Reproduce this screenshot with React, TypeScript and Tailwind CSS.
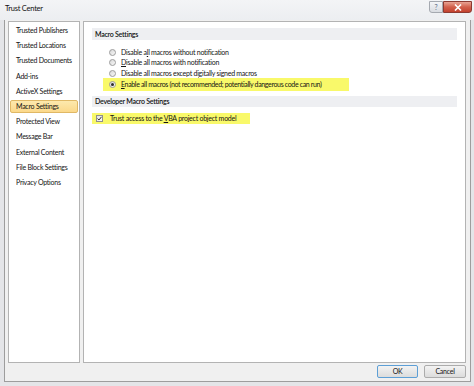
import React from "react";

const navItems = [
  "Trusted Publishers",
  "Trusted Locations",
  "Trusted Documents",
  "Add-ins",
  "ActiveX Settings",
  "Macro Settings",
  "Protected View",
  "Message Bar",
  "External Content",
  "File Block Settings",
  "Privacy Options",
];

const Radio = ({ checked = false }: { checked?: boolean }) => (
  <span className="w-[7px] h-[7px] rounded-full border border-[#9c9c9c] bg-gradient-to-br from-[#d8d8d8] to-[#f8f8f8] flex items-center justify-center shrink-0">
    {checked && <span className="w-[3px] h-[3px] rounded-full bg-[#2b2b2b]" />}
  </span>
);

const App: React.FC = () => {
  return (
    <div className="w-[474px] h-[386px] overflow-hidden bg-[#e4e5e8] text-[7px] tracking-[-0.25px] leading-none whitespace-nowrap text-[#141414] font-['Lato',sans-serif]">
      {/* title bar */}
      <div className="h-[20px] flex items-start justify-between bg-gradient-to-b from-[#f3f4f6] to-[#eceef1]">
        <span className="pl-[5px] pt-[5px] text-[7.5px] text-[#111]">Trust Center</span>
        <div className="flex pt-[1px] pr-[2px]">
          <span className="w-[14px] h-[12px] border border-[#a5a9b0] rounded-bl-[3px] bg-gradient-to-b from-[#f4f5f7] to-[#d9dce1] text-[7px] text-[#5a6a85] flex items-center justify-center">
            ?
          </span>
          <span className="w-[29px] h-[12px] border border-[#8c3a32] rounded-br-[3px] bg-gradient-to-b from-[#e7a394] via-[#d2604c] to-[#c2412e] flex items-center justify-center">
            <svg width="8" height="7" viewBox="0 0 8 7">
              <path d="M1 0.5 L7 6.5 M7 0.5 L1 6.5" stroke="#ffffff" strokeWidth="1.6" />
            </svg>
          </span>
        </div>
      </div>

      {/* dialog body */}
      <div className="ml-[4px] w-[467px] h-[362px] border-x border-b border-[#9d9d9d] bg-[#f0f0f0] pt-[1px] pl-[3px] pr-[4px] flex flex-col">
        <div className="flex gap-[3px] h-[342px]">
          {/* nav */}
          <div className="w-[72px] h-full border border-[#b3b3b3] bg-white pt-[1px] overflow-hidden">
            {navItems.map((item) => (
              <div key={item} className="h-[15.2px] px-[1px] flex items-center">
                <div
                  className={
                    item === "Macro Settings"
                      ? "w-full h-[13px] flex items-center pl-[5px] rounded-[2px] border border-[#e0b865] bg-gradient-to-b from-[#fde9ad] to-[#fbd88a]"
                      : "w-full h-[13px] flex items-center pl-[6px]"
                  }
                >
                  {item}
                </div>
              </div>
            ))}
          </div>

          {/* content */}
          <div className="w-[383px] h-full border border-[#b3b3b3] bg-white pt-[6px] px-[8px]">
            <div className="h-[12px] bg-[#eeeff2] flex items-center pl-[3px] font-semibold">
              Macro Settings
            </div>
            <div className="mt-[7px] flex flex-col">
              <label className="h-[10.5px] flex items-center gap-[5px] pl-[17px]">
                <Radio />
                <span>
                  Disable a<u>l</u>l macros without notification
                </span>
              </label>
              <label className="h-[10.5px] flex items-center gap-[5px] pl-[17px]">
                <Radio />
                <span>
                  <u>D</u>isable all macros with notification
                </span>
              </label>
              <label className="h-[10.5px] flex items-center gap-[5px] pl-[17px]">
                <Radio />
                <span>
                  Disable all macros except di<u>g</u>itally signed macros
                </span>
              </label>
              <div className="ml-[11px] -mt-[1px] w-[246px] h-[13px] bg-[#f9f96a] flex items-center gap-[5px] pl-[6px]">
                <Radio checked />
                <span className="tracking-[-0.35px]">
                  <u>E</u>nable all macros (not recommended; potentially dangerous code can run)
                </span>
              </div>
            </div>
            <div className="mt-[5px] h-[11px] bg-[#eeeff2] flex items-center pl-[3px] font-semibold">
              Developer Macro Settings
            </div>
            <div className="mt-[6px] w-[158px] h-[11px] bg-[#f9f96a] flex items-center gap-[7px] pl-[4px]">
              <span className="w-[7px] h-[7px] border border-[#8f8f8f] bg-gradient-to-br from-[#e2e2e2] to-[#fafafa] flex items-center justify-center shrink-0">
                <svg width="5" height="5" viewBox="0 0 5 5">
                  <path d="M0.5 2.6 L2 4 L4.5 0.8" stroke="#333" strokeWidth="1" fill="none" />
                </svg>
              </span>
              <span>
                Trust access to the <u>V</u>BA project object model
              </span>
            </div>
          </div>
        </div>

        {/* buttons */}
        <div className="mt-[2px] h-[13px] flex justify-end gap-[6px]">
          <button className="w-[41px] h-[13px] rounded-[2px] border border-[#5d9fd6] bg-gradient-to-b from-[#f3f3f3] to-[#dcdcdc] text-[7px] leading-none">
            OK
          </button>
          <button className="w-[42px] h-[13px] rounded-[2px] border border-[#acacac] bg-gradient-to-b from-[#f3f3f3] to-[#dcdcdc] text-[7px] leading-none">
            Cancel
          </button>
        </div>
      </div>
    </div>
  );
};

export default App;
